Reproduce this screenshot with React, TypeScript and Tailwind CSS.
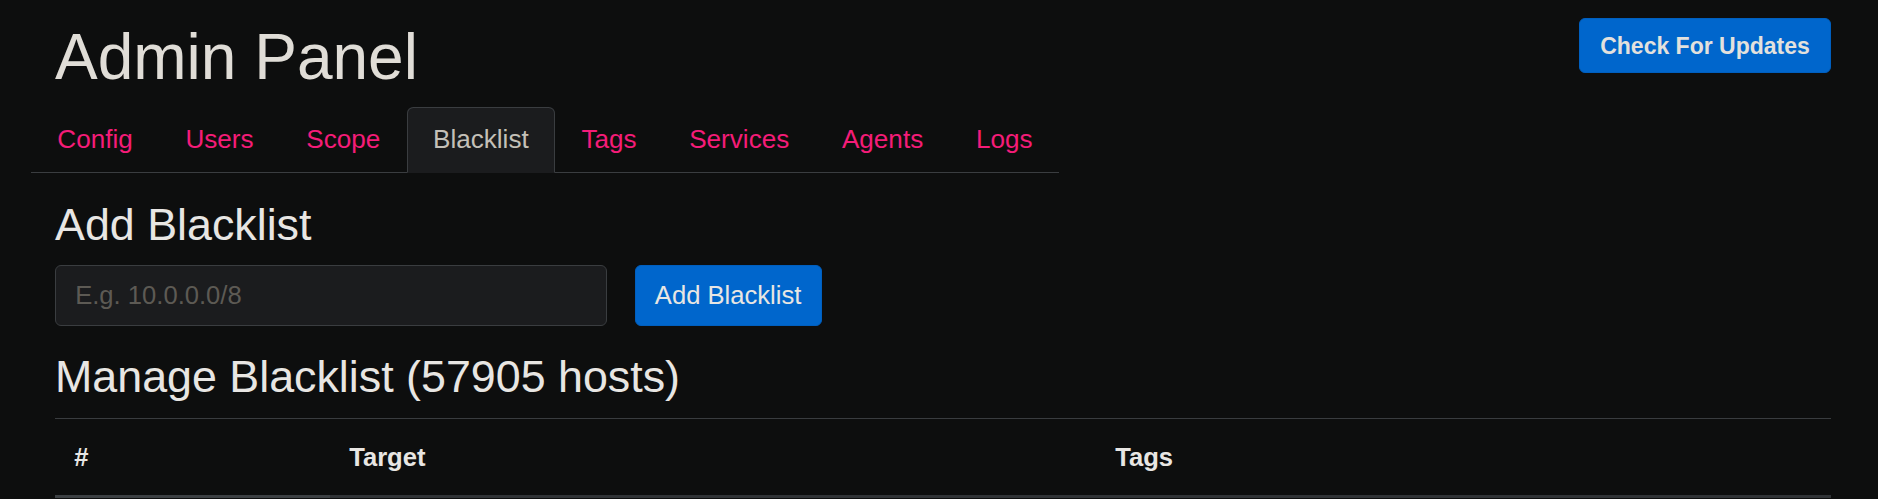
import React from "react";

const tabs = ["Config", "Users", "Scope", "Blacklist", "Tags", "Services", "Agents", "Logs"];

export default function App() {
  return (
    <div className="min-h-screen bg-[#0d0e0e] font-['Liberation_Sans',Arial,sans-serif]">
      <div className="pl-[55px] pr-[47px] pt-[18.5px]">
        <div className="flex items-start justify-between">
          <h1 className="m-0 text-[64px] font-normal leading-[1.2] text-[#e0ddd7]">Admin Panel</h1>
          <button className="-mt-[0.2px] flex h-[55px] w-[252px] items-center justify-center rounded-[6px] border-[1.6px] border-[#005fbf] bg-[#0066cc] text-[23px] font-bold text-[#e3e1dd]">
            Check For Updates
          </button>
        </div>

        <nav className="-ml-[24px] mt-[12px] flex w-fit border-b-[1.6px] border-[#3a3d40]">
          {tabs.map((t) => {
            const active = t === "Blacklist";
            return (
              <div
                key={t}
                className={
                  active
                    ? "-mb-[1.6px] rounded-t-[6.4px] border-[1.6px] border-[#3a3d40] border-b-[#1b1c1e] bg-[#1b1c1e] px-[25.35px] pb-[13.8px] pt-[11.8px] text-[26.1px] leading-[38.4px] text-[#c4c0b8]"
                    : "-mb-[1.6px] border-[1.6px] border-transparent px-[25.35px] pb-[13.8px] pt-[11.8px] text-[26.1px] leading-[38.4px] text-[#f41c78]"
                }
              >
                {t}
              </div>
            );
          })}
        </nav>

        <h3 className="mt-[25.2px] mb-[13.3px] text-[44.8px] font-normal leading-[1.2] text-[#e8e6e3]">Add Blacklist</h3>

        <div className="flex items-center gap-[27.6px]">
          <input
            placeholder="E.g. 10.0.0.0/8"
            className="h-[60.8px] w-[552px] rounded-[6px] border-[1.6px] border-[#3a3d40] bg-[#1b1c1e] px-[19.2px] text-[25.6px] text-[#e8e6e3] outline-none placeholder:text-[#5d5a54]"
          />
          <button className="h-[60.8px] w-[187px] rounded-[6px] border-[1.6px] border-[#005fbf] bg-[#0066cc] text-[25.6px] text-[#e8e6e3]">
            Add Blacklist
          </button>
        </div>

        <h3 className="mt-[24.4px] mb-[14px] text-[44.8px] font-normal leading-[1.2] text-[#e8e6e3]">
          Manage Blacklist (57905 hosts)
        </h3>

        <div className="border-t-[1.6px] border-[#393c3f]">
          <div className="flex h-[76px] text-[25.6px] font-bold text-[#e8e6e3]">
            <div className="flex w-[275px] items-center px-[19.2px]">#</div>
            <div className="flex w-[766px] items-center px-[19.2px]">Target</div>
            <div className="flex flex-1 items-center px-[19.2px]">Tags</div>
          </div>
          <div className="flex h-[3.2px]">
            <div className="w-[275px] bg-[#3c4043]" />
            <div className="flex-1 bg-[#303336]" />
          </div>
        </div>
      </div>
    </div>
  );
}
